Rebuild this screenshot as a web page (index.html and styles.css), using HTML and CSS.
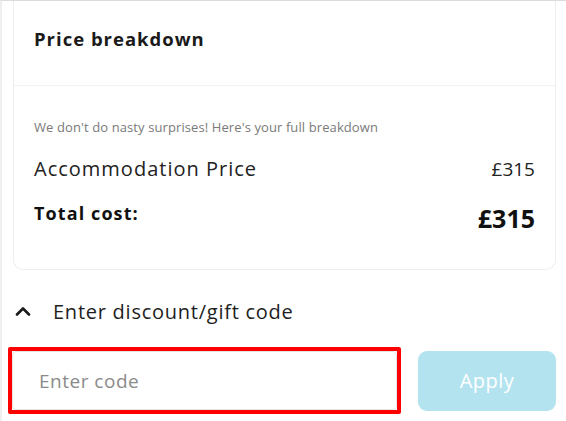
FILE: index.html
```html
<!DOCTYPE html>
<html lang="en">
<head>
<meta charset="utf-8">
<title>Price breakdown</title>
<link rel="stylesheet" href="styles.css">
</head>
<body>
<div class="page">
  <section class="card">
    <header class="card-head">
      <h2 class="card-title">Price breakdown</h2>
    </header>
    <div class="card-body">
      <p class="note">We don't do nasty surprises! Here's your full breakdown</p>
      <div class="row">
        <span class="row-label">Accommodation Price</span>
        <span class="row-value">£315</span>
      </div>
      <div class="row total">
        <span class="total-label">Total cost:</span>
        <span class="total-value">£315</span>
      </div>
    </div>
  </section>
  <div class="discount-toggle">
    <svg class="chev" width="16" height="10" viewBox="0 0 16 10" aria-hidden="true">
      <path d="M2 8.5 L8 2.5 L14 8.5" fill="none" stroke="#1a1a1a" stroke-width="2.6" stroke-linecap="round" stroke-linejoin="round"/>
    </svg>
    <span class="discount-text">Enter discount/gift code</span>
  </div>
  <div class="code-row">
    <div class="code-highlight">
      <input class="code-input" type="text" placeholder="Enter code">
    </div>
    <button class="apply-btn" type="button">Apply</button>
  </div>
</div>
</body>
</html>
```
FILE: styles.css
```css
* { box-sizing: border-box; }
html, body { margin: 0; padding: 0; background: #fff; }
body {
  font-family: "Open Sans", "DejaVu Sans", sans-serif;
  color: #1c1c1c;
  width: 566px;
  height: 421px;
  overflow: hidden;
}
.page {
  border-top: 1px solid #dcdcdc;
  border-left: 2px solid #efefef;
  height: 421px;
  padding: 0 10px 0 11px;
}
.card {
  border: 1px solid #eeeeee;
  border-top: none;
  border-radius: 0 0 10px 10px;
}
.card-head {
  height: 85px;
  display: flex;
  align-items: center;
  padding: 0 20px 10px 20px;
  border-bottom: 1px solid #f2f2f2;
}
.card-title {
  margin: 0;
  font-size: 18.5px;
  font-weight: 700;
  letter-spacing: 1px;
  color: #1a1a1a;
}
.card-body {
  padding: 32px 20px 33px 20px;
}
.note {
  margin: 0 0 20px 0;
  font-size: 13px;
  letter-spacing: 0.1px;
  color: #7a7a7a;
  line-height: 18px;
}
.row {
  display: flex;
  justify-content: space-between;
  align-items: baseline;
}
.row-label {
  font-size: 20px;
  letter-spacing: 1px;
  color: #222;
  line-height: 26px;
}
.row-value {
  font-size: 19px;
  color: #222;
  line-height: 26px;
}
.total {
  margin-top: 18px;
  align-items: flex-start;
}
.total-label {
  font-size: 18px;
  font-weight: 700;
  letter-spacing: 1.1px;
  color: #111;
  line-height: 26px;
}
.total-value {
  font-size: 25px;
  font-weight: 700;
  color: #111;
  line-height: 36px;
}
.discount-toggle {
  display: flex;
  align-items: center;
  margin-top: 28px;
  padding-left: 2px;
  height: 26px;
}
.chev { margin-right: 22px; }
.discount-text {
  font-size: 20px;
  letter-spacing: 0.75px;
  color: #1e1e1e;
}
.code-row {
  display: flex;
  align-items: center;
  margin-top: 23px;
  margin-left: -5px;
  gap: 17px;
}
.code-highlight {
  border: 4px solid #ff0000;
  border-radius: 2px;
  width: 393px;
  height: 67px;
  flex: none;
}
.code-input {
  display: block;
  width: 100%;
  height: 100%;
  border: 1px solid #e4e4e4;
  border-radius: 4px;
  padding: 0 26px;
  font-family: inherit;
  font-size: 19px;
  letter-spacing: 0.5px;
  color: #333;
  outline: none;
  background: #fff;
}
.code-input::placeholder { color: #8a8a8a; }
.apply-btn {
  width: 138px;
  height: 60px;
  flex: none;
  border: none;
  border-radius: 9px;
  background: #b3e3ef;
  color: #fff;
  font-family: inherit;
  font-size: 20px;
  letter-spacing: 0.5px;
}
```
